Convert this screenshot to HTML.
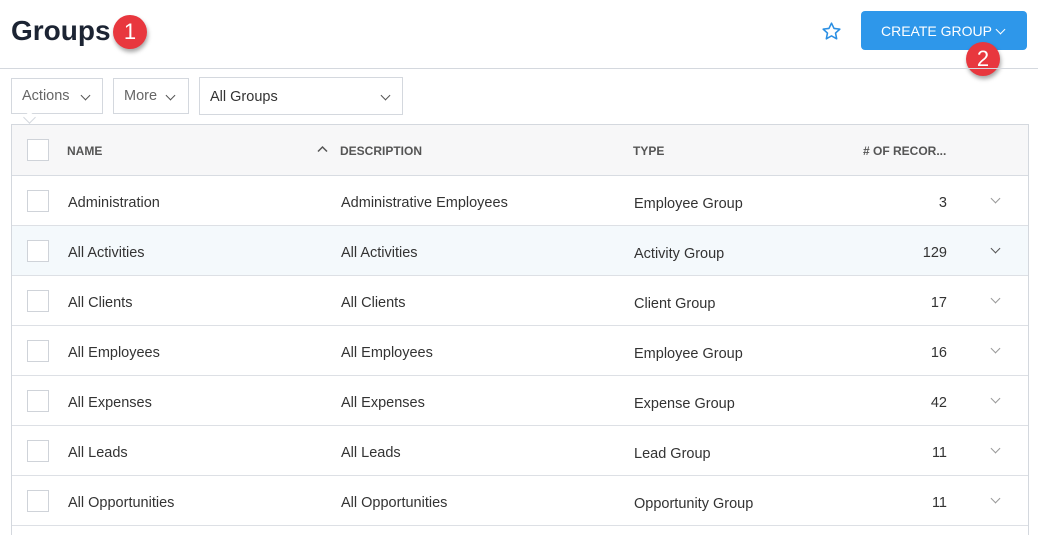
<!DOCTYPE html><html style="width:1038px;height:535px;overflow:hidden"><head><style>
*{box-sizing:border-box;margin:0;padding:0}
body{width:1038px;height:535px;overflow:hidden;background:#fff;font-family:"Liberation Sans",sans-serif;color:#333;position:relative}
.a{position:absolute}
h1{position:absolute;left:11px;top:15px;font-size:28px;font-weight:bold;color:#1c2433}
.badge{position:absolute;width:34px;height:34px;border-radius:50%;background:#e8373e;color:#fff;font-size:22px;text-align:center;line-height:34px;box-shadow:1px 3px 4px rgba(0,0,0,.35)}
.btn{position:absolute;border:1px solid #d4d8de;font-size:14.5px;color:#666;background:#fff}
.chev{position:absolute;width:7px;height:7px;border-right:1.5px solid #555;border-bottom:1.5px solid #555;transform:rotate(45deg)}
.tbl{position:absolute;left:11px;top:124px;width:1018px;height:420px;border:1px solid #d4d8de}
.hdr{position:absolute;left:0;top:0;width:100%;height:51px;background:#f7f7f8;border-bottom:1px solid #d8dce2}
.hdr span{position:absolute;top:19px;font-size:12px;font-weight:bold;color:#555}
.row{position:absolute;left:0;width:100%;height:50px;border-bottom:1px solid #dde0e5;font-size:14.5px;color:#333}
.row span{position:absolute}
.cb{position:absolute;left:15px;width:22px;height:22px;border:1px solid #cfd3d9;background:#fff}
</style></head><body>
<h1>Groups</h1>
<div class="badge" style="left:113px;top:15px">1</div>
<svg class="a" style="left:821px;top:21px" width="21" height="21" viewBox="0 0 24 24"><path d="M12 2.5l2.9 6 6.6.8-4.9 4.5 1.3 6.5L12 17l-5.9 3.3 1.3-6.5L2.5 9.3l6.6-.8z" fill="none" stroke="#2b8fe3" stroke-width="1.8" stroke-linejoin="round"/></svg>
<div class="a" style="left:861px;top:11px;width:166px;height:39px;background:#2e97ea;border-radius:4px;color:#fff;font-size:14px;line-height:40px;padding-left:20px">CREATE GROUP</div>
<div class="chev" style="left:997px;top:26px;border-color:#fff"></div>
<div class="badge" style="left:966px;top:42px">2</div>
<div class="a" style="left:0;top:68px;width:1038px;height:1px;background:#d4d8de"></div>
<div class="btn" style="left:11px;top:78px;width:92px;height:36px;line-height:34px;padding-left:10px">Actions</div>
<div class="chev" style="left:82px;top:92px"></div>
<div class="a" style="left:25px;top:113px;width:9px;height:9px;background:#fff;border-right:1px solid #d4d8de;border-bottom:1px solid #d4d8de;transform:rotate(45deg)"></div>
<div class="btn" style="left:113px;top:78px;width:76px;height:36px;line-height:34px;padding-left:10px">More</div>
<div class="chev" style="left:167px;top:92px"></div>
<div class="btn" style="left:199px;top:77px;width:204px;height:38px;line-height:38px;padding-left:10px;color:#333">All Groups</div>
<div class="chev" style="left:382px;top:92px"></div>
<div class="tbl">
<div class="hdr"><div class="cb" style="top:14px"></div>
<span style="left:55px">NAME</span><svg class="a" style="left:305px;top:20px" width="11" height="8" viewBox="0 0 11 8"><path d="M1 6.5L5.5 2 10 6.5" fill="none" stroke="#555" stroke-width="1.5"/></svg><span style="left:328px">DESCRIPTION</span><span style="left:621px">TYPE</span><span style="left:851px"># OF RECOR...</span></div>
<div class="row" style="top:51px"><div class="cb" style="top:14px"></div><span style="left:56px;top:19px">Administration</span><span style="left:329px;top:19px">Administrative Employees</span><span style="left:622px;top:20px">Employee Group</span><span style="right:81px;top:19px">3</span><div class="chev" style="left:980px;top:19px;border-color:#999"></div></div>
<div class="row" style="top:101px;background:#f4f9fc"><div class="cb" style="top:14px"></div><span style="left:56px;top:19px">All Activities</span><span style="left:329px;top:19px">All Activities</span><span style="left:622px;top:20px">Activity Group</span><span style="right:81px;top:19px">129</span><div class="chev" style="left:980px;top:19px"></div></div>
<div class="row" style="top:151px"><div class="cb" style="top:14px"></div><span style="left:56px;top:19px">All Clients</span><span style="left:329px;top:19px">All Clients</span><span style="left:622px;top:20px">Client Group</span><span style="right:81px;top:19px">17</span><div class="chev" style="left:980px;top:19px;border-color:#999"></div></div>
<div class="row" style="top:201px"><div class="cb" style="top:14px"></div><span style="left:56px;top:19px">All Employees</span><span style="left:329px;top:19px">All Employees</span><span style="left:622px;top:20px">Employee Group</span><span style="right:81px;top:19px">16</span><div class="chev" style="left:980px;top:19px;border-color:#999"></div></div>
<div class="row" style="top:251px"><div class="cb" style="top:14px"></div><span style="left:56px;top:19px">All Expenses</span><span style="left:329px;top:19px">All Expenses</span><span style="left:622px;top:20px">Expense Group</span><span style="right:81px;top:19px">42</span><div class="chev" style="left:980px;top:19px;border-color:#999"></div></div>
<div class="row" style="top:301px"><div class="cb" style="top:14px"></div><span style="left:56px;top:19px">All Leads</span><span style="left:329px;top:19px">All Leads</span><span style="left:622px;top:20px">Lead Group</span><span style="right:81px;top:19px">11</span><div class="chev" style="left:980px;top:19px;border-color:#999"></div></div>
<div class="row" style="top:351px"><div class="cb" style="top:14px"></div><span style="left:56px;top:19px">All Opportunities</span><span style="left:329px;top:19px">All Opportunities</span><span style="left:622px;top:20px">Opportunity Group</span><span style="right:81px;top:19px">11</span><div class="chev" style="left:980px;top:19px;border-color:#999"></div></div>
</div>
</body></html>
